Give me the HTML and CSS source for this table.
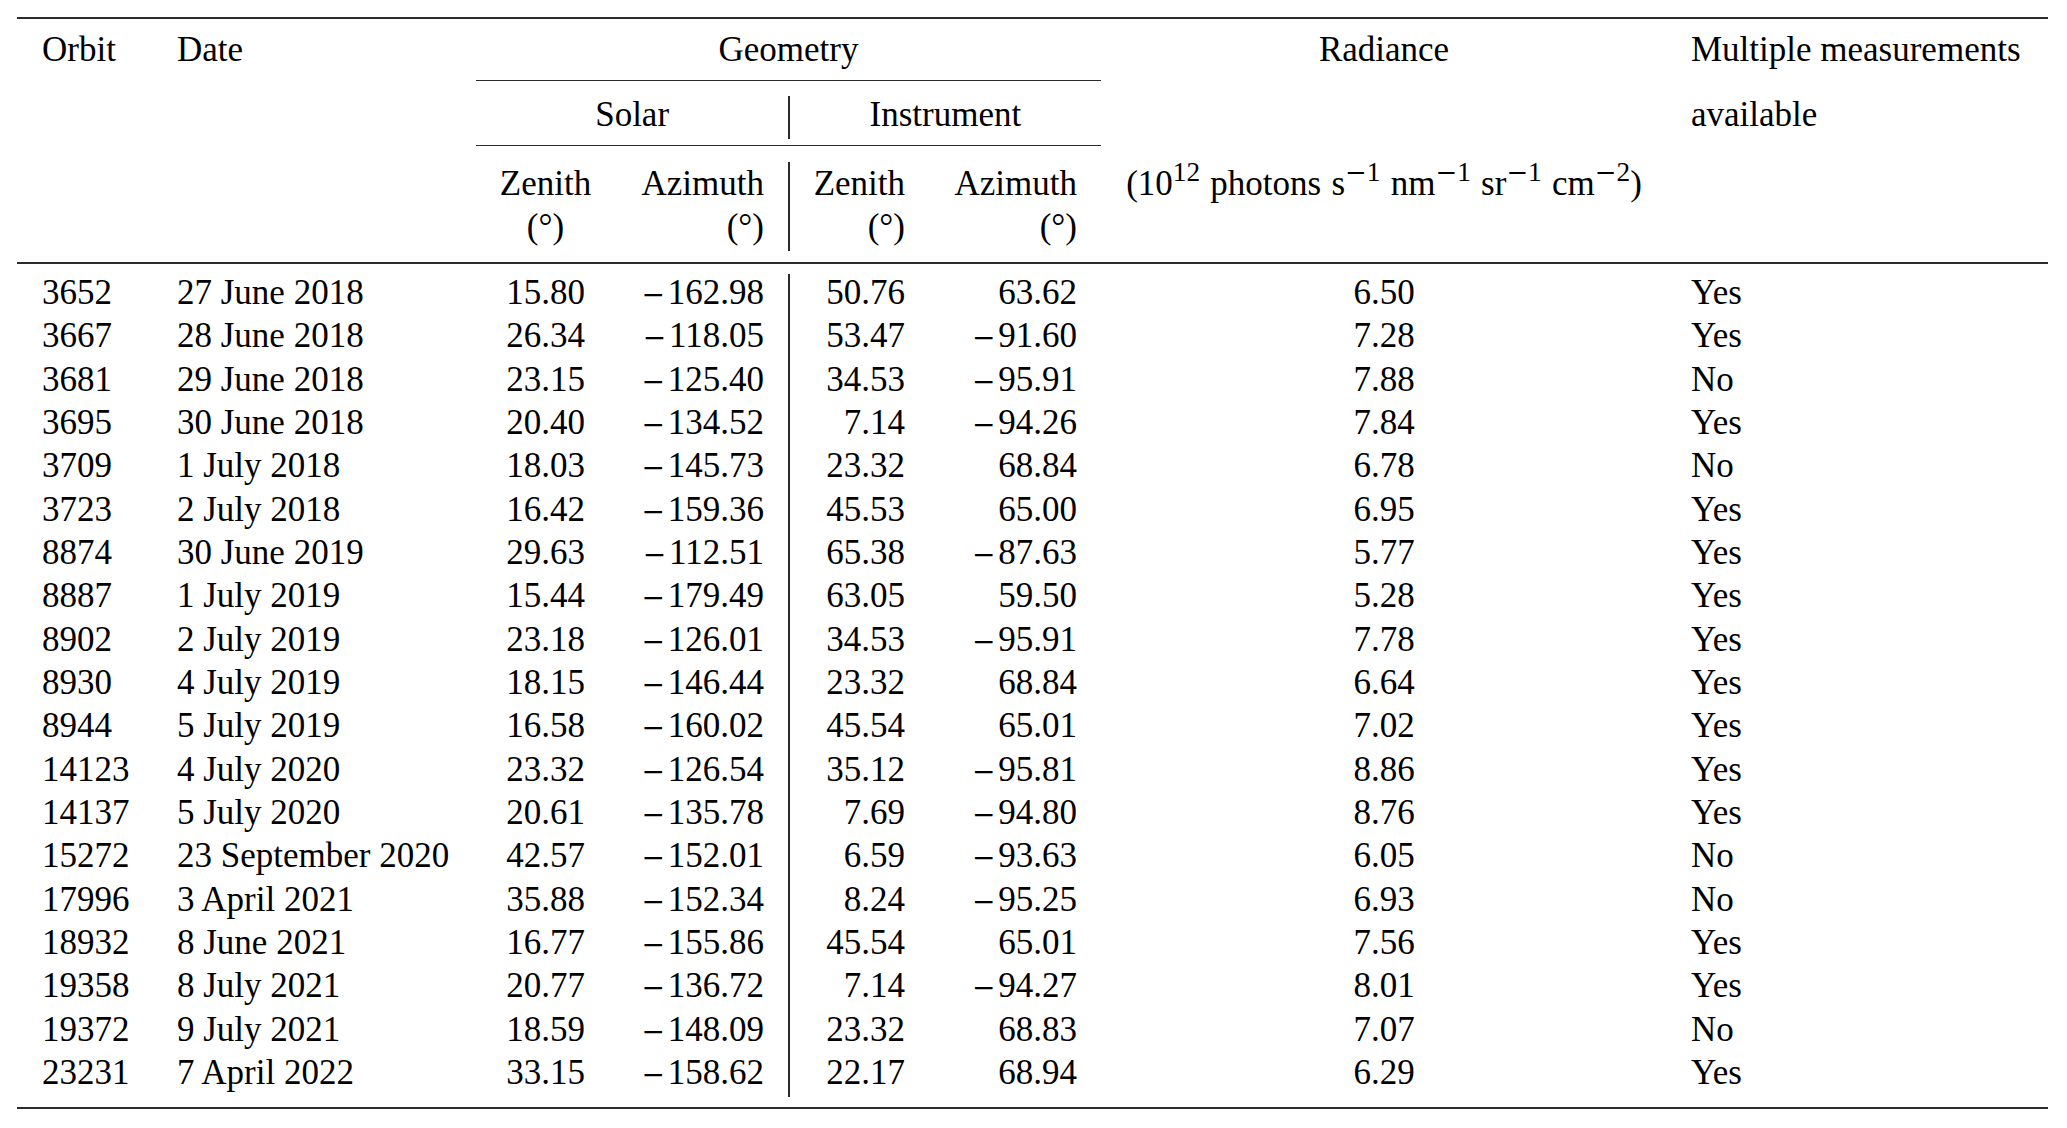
FILE: index.html
```html
<!DOCTYPE html>
<html lang="en">
<head>
<meta charset="utf-8">
<title>Orbit geometry and radiance table</title>
<link rel="stylesheet" href="styles.css">
</head>
<body>
<div class="tbl">
  <div class="head grid">
    <div class="rule full r1"></div>

    <div class="ha c1">Orbit</div>
    <div class="ha c2">Date</div>
    <div class="ha geo">Geometry</div>
    <div class="ha c8">Radiance</div>
    <div class="ha c9">Multiple measurements</div>

    <div class="rule cmid r3"></div>

    <div class="hb solar">Solar</div>
    <div class="vline vb"></div>
    <div class="hb instr">Instrument</div>
    <div class="hb c9">available</div>

    <div class="rule cmid r5"></div>

    <div class="hc c3">Zenith<br>(°)</div>
    <div class="hc c4">Azimuth<br>(°)</div>
    <div class="vline vc"></div>
    <div class="hc c6">Zenith<br>(°)</div>
    <div class="hc c7">Azimuth<br>(°)</div>
    <div class="hc c8 unit">(10<span class="sup">12</span> photons s<span class="sup"><span class="sm">−</span>1</span> nm<span class="sup"><span class="sm">−</span>1</span> sr<span class="sup"><span class="sm">−</span>1</span> cm<span class="sup"><span class="sm">−</span>2</span>)</div>

    <div class="rule full r7"></div>
  </div>

  <div class="body grid">
    <div class="vline vd"></div>

    <div class="c1">3652</div><div class="c2">27 June 2018</div><div class="c3">15.80</div><div class="c4"><span class="m">−</span>162.98</div><div class="c6">50.76</div><div class="c7">63.62</div><div class="c8">6.50</div><div class="c9">Yes</div>
    <div class="c1">3667</div><div class="c2">28 June 2018</div><div class="c3">26.34</div><div class="c4"><span class="m">−</span>118.05</div><div class="c6">53.47</div><div class="c7"><span class="m">−</span>91.60</div><div class="c8">7.28</div><div class="c9">Yes</div>
    <div class="c1">3681</div><div class="c2">29 June 2018</div><div class="c3">23.15</div><div class="c4"><span class="m">−</span>125.40</div><div class="c6">34.53</div><div class="c7"><span class="m">−</span>95.91</div><div class="c8">7.88</div><div class="c9">No</div>
    <div class="c1">3695</div><div class="c2">30 June 2018</div><div class="c3">20.40</div><div class="c4"><span class="m">−</span>134.52</div><div class="c6">7.14</div><div class="c7"><span class="m">−</span>94.26</div><div class="c8">7.84</div><div class="c9">Yes</div>
    <div class="c1">3709</div><div class="c2">1 July 2018</div><div class="c3">18.03</div><div class="c4"><span class="m">−</span>145.73</div><div class="c6">23.32</div><div class="c7">68.84</div><div class="c8">6.78</div><div class="c9">No</div>
    <div class="c1">3723</div><div class="c2">2 July 2018</div><div class="c3">16.42</div><div class="c4"><span class="m">−</span>159.36</div><div class="c6">45.53</div><div class="c7">65.00</div><div class="c8">6.95</div><div class="c9">Yes</div>
    <div class="c1">8874</div><div class="c2">30 June 2019</div><div class="c3">29.63</div><div class="c4"><span class="m">−</span>112.51</div><div class="c6">65.38</div><div class="c7"><span class="m">−</span>87.63</div><div class="c8">5.77</div><div class="c9">Yes</div>
    <div class="c1">8887</div><div class="c2">1 July 2019</div><div class="c3">15.44</div><div class="c4"><span class="m">−</span>179.49</div><div class="c6">63.05</div><div class="c7">59.50</div><div class="c8">5.28</div><div class="c9">Yes</div>
    <div class="c1">8902</div><div class="c2">2 July 2019</div><div class="c3">23.18</div><div class="c4"><span class="m">−</span>126.01</div><div class="c6">34.53</div><div class="c7"><span class="m">−</span>95.91</div><div class="c8">7.78</div><div class="c9">Yes</div>
    <div class="c1">8930</div><div class="c2">4 July 2019</div><div class="c3">18.15</div><div class="c4"><span class="m">−</span>146.44</div><div class="c6">23.32</div><div class="c7">68.84</div><div class="c8">6.64</div><div class="c9">Yes</div>
    <div class="c1">8944</div><div class="c2">5 July 2019</div><div class="c3">16.58</div><div class="c4"><span class="m">−</span>160.02</div><div class="c6">45.54</div><div class="c7">65.01</div><div class="c8">7.02</div><div class="c9">Yes</div>
    <div class="c1">14123</div><div class="c2">4 July 2020</div><div class="c3">23.32</div><div class="c4"><span class="m">−</span>126.54</div><div class="c6">35.12</div><div class="c7"><span class="m">−</span>95.81</div><div class="c8">8.86</div><div class="c9">Yes</div>
    <div class="c1">14137</div><div class="c2">5 July 2020</div><div class="c3">20.61</div><div class="c4"><span class="m">−</span>135.78</div><div class="c6">7.69</div><div class="c7"><span class="m">−</span>94.80</div><div class="c8">8.76</div><div class="c9">Yes</div>
    <div class="c1">15272</div><div class="c2">23 September 2020</div><div class="c3">42.57</div><div class="c4"><span class="m">−</span>152.01</div><div class="c6">6.59</div><div class="c7"><span class="m">−</span>93.63</div><div class="c8">6.05</div><div class="c9">No</div>
    <div class="c1">17996</div><div class="c2">3 April 2021</div><div class="c3">35.88</div><div class="c4"><span class="m">−</span>152.34</div><div class="c6">8.24</div><div class="c7"><span class="m">−</span>95.25</div><div class="c8">6.93</div><div class="c9">No</div>
    <div class="c1">18932</div><div class="c2">8 June 2021</div><div class="c3">16.77</div><div class="c4"><span class="m">−</span>155.86</div><div class="c6">45.54</div><div class="c7">65.01</div><div class="c8">7.56</div><div class="c9">Yes</div>
    <div class="c1">19358</div><div class="c2">8 July 2021</div><div class="c3">20.77</div><div class="c4"><span class="m">−</span>136.72</div><div class="c6">7.14</div><div class="c7"><span class="m">−</span>94.27</div><div class="c8">8.01</div><div class="c9">Yes</div>
    <div class="c1">19372</div><div class="c2">9 July 2021</div><div class="c3">18.59</div><div class="c4"><span class="m">−</span>148.09</div><div class="c6">23.32</div><div class="c7">68.83</div><div class="c8">7.07</div><div class="c9">No</div>
    <div class="c1">23231</div><div class="c2">7 April 2022</div><div class="c3">33.15</div><div class="c4"><span class="m">−</span>158.62</div><div class="c6">22.17</div><div class="c7">68.94</div><div class="c8">6.29</div><div class="c9">Yes</div>
  </div>
</div>
</body>
</html>
```

FILE: styles.css
```css
html, body {
  margin: 0;
  padding: 0;
  background: #ffffff;
}

body {
  font-family: "Liberation Serif", "Times New Roman", serif;
  font-size: 35px;
  color: #000000;
}

.tbl {
  margin: 17px 0 0 17px;
  width: 2031px;
}

.grid {
  display: grid;
  grid-template-columns: 143px 316px 139px 173.25px 1.5px 140.25px 171px 566px 381px;
  line-height: 43.35px;
  white-space: nowrap;
}

/* ---------- header ---------- */
.head {
  grid-template-rows: 2px 60.5px 1.5px 63.5px 1.5px 116px 2px;
}

.rule {
  background: #2b2b2b;
}

.full {
  grid-column: 1 / -1;
}

.cmid {
  grid-column: 3 / 8;
}

.r1 { grid-row: 1; }
.r3 { grid-row: 3; }
.r5 { grid-row: 5; }
.r7 { grid-row: 7; }

.ha {
  grid-row: 2;
  padding-top: 8.5px;
}

.hb {
  grid-row: 4;
  padding-top: 11.5px;
}

.hc {
  grid-row: 6;
  padding-top: 15.5px;
}

.geo {
  grid-column: 3 / 8;
  text-align: center;
}

.solar {
  grid-column: 3 / 5;
  text-align: center;
}

.instr {
  grid-column: 6 / 8;
  text-align: center;
}

.vline {
  grid-column: 5;
  background: #2b2b2b;
}

.vb {
  grid-row: 4;
  margin: 15px 0 5.5px;
}

.vc {
  grid-row: 6;
  margin: 16px 0 11px;
}

.unit {
  word-spacing: 1.5px;
}

.sup {
  font-size: 0.78em;
  vertical-align: 0.5em;
  line-height: 0;
}

.sm {
  font-family: "DejaVu Serif", "Liberation Serif", serif;
  font-size: 0.95em;
}

/* ---------- columns ---------- */
.c1 { grid-column: 1; padding-left: 25px; }
.c2 { grid-column: 2; padding-left: 17px; }
.c3 { grid-column: 3; text-align: center; }
.c4 { grid-column: 4; text-align: right; padding-right: 24.25px; }
.c6 { grid-column: 6; text-align: right; padding-right: 25px; }
.c7 { grid-column: 7; text-align: right; padding-right: 24px; }
.c8 { grid-column: 8; text-align: center; }
.c9 { grid-column: 9; padding-left: 24px; }

.m {
  font-family: "DejaVu Serif", "Liberation Serif", serif;
  font-size: 0.8em;
  padding: 0 0.1em 0 0.02em;
}

/* ---------- body ---------- */
.body {
  grid-template-rows: repeat(19, 43.35px);
  padding: 6.9px 0 13px;
  border-bottom: 2px solid #2b2b2b;
}

.vd {
  grid-row: 1 / 20;
  margin: 3.1px 0 -2.45px;
}
```
